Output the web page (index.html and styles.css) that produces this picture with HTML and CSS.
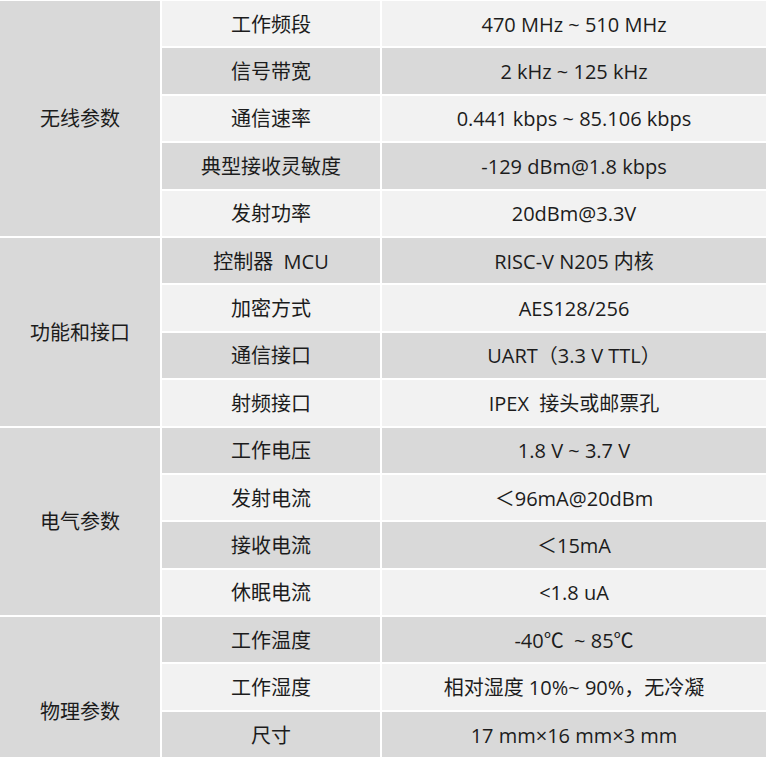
FILE: index.html
```html
<!DOCTYPE html>
<html lang="zh-CN">
<head>
<meta charset="utf-8">
<title>参数表</title>
<link rel="stylesheet" href="styles.css">
</head>
<body>
<table class="spec">
  <colgroup>
    <col class="c-group">
    <col class="c-name">
    <col class="c-value">
  </colgroup>
  <tbody>
    <tr class="odd"><td class="group" rowspan="5">无线参数</td><td>工作频段</td><td>470 MHz ~ 510 MHz</td></tr>
    <tr class="even"><td>信号带宽</td><td>2 kHz ~ 125 kHz</td></tr>
    <tr class="odd"><td>通信速率</td><td>0.441 kbps ~ 85.106 kbps</td></tr>
    <tr class="even"><td>典型接收灵敏度</td><td>-129 dBm@1.8 kbps</td></tr>
    <tr class="odd"><td>发射功率</td><td>20dBm@3.3V</td></tr>
    <tr class="even"><td class="group" rowspan="4">功能和接口</td><td>控制器&nbsp; MCU</td><td>RISC-V N205 内核</td></tr>
    <tr class="odd"><td>加密方式</td><td>AES128/256</td></tr>
    <tr class="even"><td>通信接口</td><td>UART（3.3 V TTL）</td></tr>
    <tr class="odd"><td>射频接口</td><td>IPEX&nbsp; 接头或邮票孔</td></tr>
    <tr class="even"><td class="group" rowspan="4">电气参数</td><td>工作电压</td><td>1.8 V ~ 3.7 V</td></tr>
    <tr class="odd"><td>发射电流</td><td>＜96mA@20dBm</td></tr>
    <tr class="even"><td>接收电流</td><td>＜15mA</td></tr>
    <tr class="odd"><td>休眠电流</td><td>&lt;1.8 uA</td></tr>
    <tr class="even"><td class="group group-cut" rowspan="3">物理参数</td><td>工作温度</td><td>-40℃&nbsp; ~ 85℃</td></tr>
    <tr class="odd"><td>工作湿度</td><td>相对湿度 10%~ 90%，无冷凝</td></tr>
    <tr class="even"><td>尺寸</td><td>17 mm×16 mm×3 mm</td></tr>
  </tbody>
</table>
</body>
</html>
```

FILE: styles.css
```css
html, body {
  margin: 0;
  padding: 0;
  background: #ffffff;
}

body {
  width: 768px;
  height: 759px;
  overflow: hidden;
}

.spec {
  border-collapse: separate;
  border-spacing: 2px;
  margin: -1px 0 0 -2px;
  table-layout: fixed;
  width: 770px;
  font-family: "Open Sans", "Noto Sans CJK SC", sans-serif;
  font-size: 20px;
  color: #1c1c1c;
}

.c-group { width: 160px; }
.c-name { width: 218px; }
.c-value { width: 384px; }

.spec td {
  height: 43.4px;
  padding: 2px 0 0;
  text-align: center;
  vertical-align: middle;
  line-height: 1;
  white-space: nowrap;
}

.spec tr.odd td { background: #f2f2f2; }
.spec tr.even td { background: #d9d9d9; }
.spec td.group,
.spec tr.odd td.group,
.spec tr.even td.group { background: #d9d9d9; }

.spec td.group-cut { padding-top: 50px; }
```
